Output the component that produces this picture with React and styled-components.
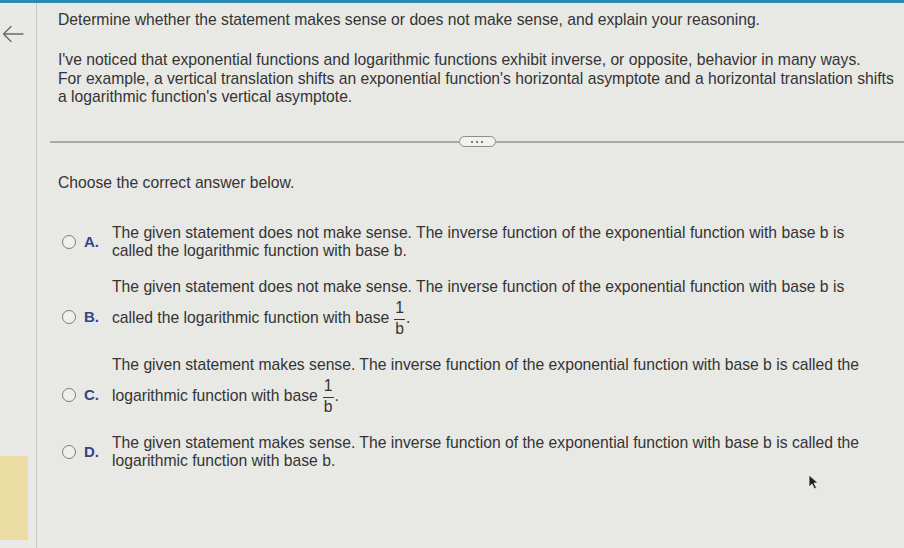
import React from "react";
import styled, { createGlobalStyle } from "styled-components";

const Global = createGlobalStyle`
  html, body { margin: 0; padding: 0; }
  body {
    background: #e7e7e4;
    font-family: "Liberation Sans", Arial, sans-serif;
    color: #343434;
  }
`;

const Page = styled.div`
  position: relative;
  display: flex;
  width: 904px;
  height: 548px;
  overflow: hidden;
  background: linear-gradient(180deg, #2a8db0 0, #2a8db0 3px, #e8e8e5 3px);
`;

const Sidebar = styled.aside`
  width: 36px;
  flex: none;
  display: flex;
  flex-direction: column;
  justify-content: space-between;
  border-right: 1px solid #c9c9c6;
  background: #e9e9e7;
  margin-top: 3px;
`;

const Back = styled.button`
  margin: 20px 0 0 2px;
  padding: 0;
  width: 22px;
  height: 22px;
  border: none;
  background: none;
  color: #6a6a6a;
  display: flex;
  align-items: center;
  justify-content: center;
`;

const Highlight = styled.div`
  width: 28px;
  height: 84px;
  margin-bottom: 8px;
  background: #ebdca4;
`;

const Main = styled.main`
  flex: 1;
  padding: 11px 0 0 21px;
  font-size: 15.7px;
`;

const Heading = styled.p`
  margin: 0;
  line-height: 18px;
`;

const Statement = styled.p`
  margin: 22px 0 0;
  line-height: 18.5px;
`;

const Divider = styled.div`
  display: flex;
  align-items: center;
  margin: 29px 0 0 -8px;
  height: 12px;
`;

const Rule = styled.div`
  flex: 1;
  height: 2px;
  background: #a9a9a7;
`;

const MoreButton = styled.button`
  flex: none;
  width: 37px;
  height: 11px;
  padding: 0;
  border: 1.5px solid #8d8d8b;
  border-radius: 6px;
  background: #f1f1ef;
  display: flex;
  align-items: center;
  justify-content: center;
  gap: 3px;
`;

const Dot = styled.span`
  width: 2px;
  height: 2px;
  border-radius: 50%;
  background: #555;
`;

const Prompt = styled.p`
  margin: 26px 0 0;
  line-height: 18px;
`;

const Options = styled.div`
  margin-top: 32px;
  display: flex;
  flex-direction: column;
  gap: 18px;
`;

const Option = styled.label`
  display: grid;
  grid-template-columns: 22px 28px 1fr;
  align-items: center;
  padding-left: 4px;
`;

const Radio = styled.span`
  width: 12px;
  height: 12px;
  border: 1.5px solid #7b7b7b;
  border-radius: 50%;
  background: #efefed;
  margin-top: ${(p) => (p.$low ? "18px" : "0")};
`;

const Letter = styled.span`
  font-weight: bold;
  color: #33458a;
  font-size: 15px;
  margin-top: ${(p) => (p.$low ? "18px" : "0")};
`;

const OptionText = styled.span`
  line-height: 18px;
`;

const Line = styled.span`
  display: block;
  white-space: nowrap;
  margin-top: ${(p) => (p.$tall ? "3px" : "0")};
`;

const Frac = styled.span`
  display: inline-flex;
  flex-direction: column;
  align-items: center;
  vertical-align: middle;
  margin: 0 1px 0 5px;
  line-height: 18px;
`;

const Num = styled.span`
  padding: 0 1px 2px;
  border-bottom: 1px solid #343434;
`;

const Cursor = styled.svg`
  position: absolute;
  left: 808px;
  top: 474px;
`;

const Fraction = () => (
  <Frac>
    <Num>1</Num>
    <span>b</span>
  </Frac>
);

const options = [
  {
    letter: "A",
    first: "The given statement does not make sense. The inverse function of the exponential function with base b is",
    second: "called the logarithmic function with base",
    frac: false,
  },
  {
    letter: "B",
    first: "The given statement does not make sense. The inverse function of the exponential function with base b is",
    second: "called the logarithmic function with base",
    frac: true,
  },
  {
    letter: "C",
    first: "The given statement makes sense. The inverse function of the exponential function with base b is called the",
    second: "logarithmic function with base",
    frac: true,
  },
  {
    letter: "D",
    first: "The given statement makes sense. The inverse function of the exponential function with base b is called the",
    second: "logarithmic function with base",
    frac: false,
  },
];

export default function App() {
  return (
    <>
      <Global />
      <Page>
        <Sidebar>
          <Back aria-label="Back">
            <svg width="22" height="18" viewBox="0 0 22 18" fill="none" stroke="currentColor" strokeWidth="1.4" strokeLinecap="round" strokeLinejoin="round">
              <path d="M21 9H2M9 1.5L1.5 9L9 16.5" />
            </svg>
          </Back>
          <Highlight />
        </Sidebar>
        <Main>
          <Heading>
            Determine whether the statement makes sense or does not make sense, and explain your reasoning.
          </Heading>
          <Statement>
            I've noticed that exponential functions and logarithmic functions exhibit inverse, or opposite, behavior in many ways.
            <br />
            For example, a vertical translation shifts an exponential function's horizontal asymptote and a horizontal translation shifts
            <br />
            a logarithmic function's vertical asymptote.
          </Statement>
          <Divider>
            <Rule />
            <MoreButton aria-label="More">
              <Dot />
              <Dot />
              <Dot />
            </MoreButton>
            <Rule />
          </Divider>
          <Prompt>Choose the correct answer below.</Prompt>
          <Options>
            {options.map((o) => (
              <Option key={o.letter}>
                <Radio $low={o.frac} />
                <Letter $low={o.frac}>{o.letter}.</Letter>
                <OptionText>
                  <Line>{o.first}</Line>
                  <Line $tall={o.frac}>
                    {o.second}
                    {o.frac ? (
                      <>
                        <Fraction />.
                      </>
                    ) : (
                      " b."
                    )}
                  </Line>
                </OptionText>
              </Option>
            ))}
          </Options>
        </Main>
        <Cursor width="12" height="16" viewBox="0 0 12 16" aria-hidden="true">
          <path d="M1 1L1 13L4 10L6.5 15L8.5 14L6 9L10 9Z" fill="#222" stroke="#eee" strokeWidth="0.8" />
        </Cursor>
      </Page>
    </>
  );
}
